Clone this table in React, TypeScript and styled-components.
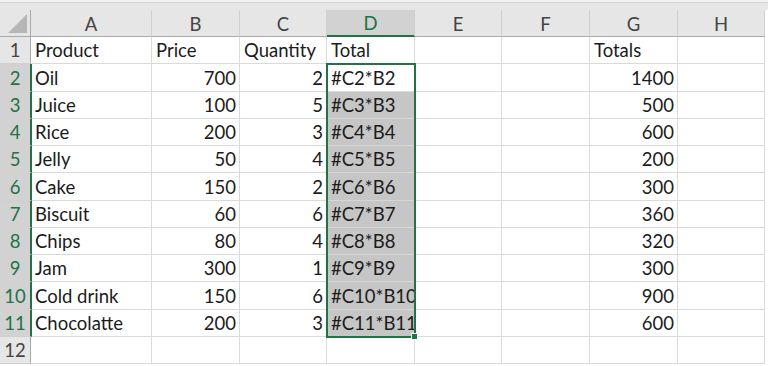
import React from "react";
import styled, { createGlobalStyle } from "styled-components";

const GREEN = "#217346";
const GRID_LINE = "#dadada";
const HEAD_BG = "#e6e6e6";
const HEAD_SEL_BG = "#d2d2d2";
const HEAD_EDGE = "#a9a9a9";
const SEL_FILL = "#c6c6c6";

const GlobalStyle = createGlobalStyle`
  html, body { margin: 0; padding: 0; background: #fff; }
  body { font-family: Lato, "Liberation Sans", sans-serif; }
  #root { width: 768px; height: 366px; overflow: hidden; }
`;

const COLUMNS = ["A", "B", "C", "D", "E", "F", "G", "H"];
const ACTIVE_COL = 3;
const SEL_FIRST_ROW = 2;
const SEL_LAST_ROW = 11;

const rows: string[][] = [
  ["Product", "Price", "Quantity", "Total", "", "", "Totals", ""],
  ["Oil", "700", "2", "#C2*B2", "", "", "1400", ""],
  ["Juice", "100", "5", "#C3*B3", "", "", "500", ""],
  ["Rice", "200", "3", "#C4*B4", "", "", "600", ""],
  ["Jelly", "50", "4", "#C5*B5", "", "", "200", ""],
  ["Cake", "150", "2", "#C6*B6", "", "", "300", ""],
  ["Biscuit", "60", "6", "#C7*B7", "", "", "360", ""],
  ["Chips", "80", "4", "#C8*B8", "", "", "320", ""],
  ["Jam", "300", "1", "#C9*B9", "", "", "300", ""],
  ["Cold drink", "150", "6", "#C10*B10", "", "", "900", ""],
  ["Chocolatte", "200", "3", "#C11*B11", "", "", "600", ""],
  ["", "", "", "", "", "", "", ""],
];

const Window = styled.div`
  width: 768px;
  height: 366px;
  background: #fff;
  overflow: hidden;
  display: flex;
  flex-direction: column;
`;

const TopStrip = styled.div`
  flex: 0 0 10px;
  background: linear-gradient(#f2f2f2 0 2px, #d2d2d2 2px 3px, ${HEAD_BG} 3px);
`;

const Sheet = styled.div`
  display: grid;
  grid-template-columns: 31px 121px 88px 87px 88px 87px 88px 88px 87px;
  grid-template-rows: 27px repeat(12, 27.27px);
  font-size: 18.5px;
  line-height: 20px;
`;

/* every part sits on an explicit track so the selection frame can overlap cells */
type Pos = { $r: number; $c: number };

const Corner = styled.div`
  grid-row: 1;
  grid-column: 1;
  background: ${HEAD_BG};
  border-right: 1px solid ${HEAD_EDGE};
  border-bottom: 1px solid ${HEAD_EDGE};
  display: flex;
  align-items: flex-end;
  justify-content: flex-end;
  padding: 0 3px 3px 0;
`;

const SelectAll = styled.div`
  width: 19px;
  height: 19px;
  background: #b6b6b6;
  clip-path: polygon(100% 0, 100% 100%, 0 100%);
`;

const ColHeader = styled.div<Pos & { $active?: boolean }>`
  grid-row: ${(p) => p.$r};
  grid-column: ${(p) => p.$c};
  background: ${(p) => (p.$active ? HEAD_SEL_BG : HEAD_BG)};
  color: ${(p) => (p.$active ? GREEN : "#444")};
  border-right: 1px solid #d0d0d0;
  border-bottom: ${(p) => (p.$active ? `2px solid ${GREEN}` : `1px solid ${HEAD_EDGE}`)};
  display: flex;
  align-items: center;
  justify-content: center;
  padding-top: 1px;
`;

const RowHeader = styled.div<Pos & { $active?: boolean }>`
  grid-row: ${(p) => p.$r};
  grid-column: ${(p) => p.$c};
  background: ${(p) => (p.$active ? HEAD_SEL_BG : HEAD_BG)};
  color: ${(p) => (p.$active ? GREEN : "#444")};
  border-right: ${(p) => (p.$active ? `2px solid ${GREEN}` : `1px solid ${HEAD_EDGE}`)};
  margin-right: ${(p) => (p.$active ? "-1px" : "0")};
  position: relative;
  z-index: ${(p) => (p.$active ? 1 : 0)};
  border-bottom: 1px solid #d0d0d0;
  display: flex;
  align-items: flex-end;
  justify-content: center;
  padding-bottom: 3px;
`;

const Cell = styled.div<Pos & { $numeric?: boolean; $selected?: boolean }>`
  grid-row: ${(p) => p.$r};
  grid-column: ${(p) => p.$c};
  background: ${(p) => (p.$selected ? SEL_FILL : "#fff")};
  color: #1b1b1b;
  border-right: 1px solid ${(p) => (p.$selected ? "#c0c0c0" : GRID_LINE)};
  border-bottom: 1px solid ${(p) => (p.$selected ? "#d6d6d6" : GRID_LINE)};
  display: flex;
  align-items: flex-end;
  justify-content: ${(p) => (p.$numeric ? "flex-end" : "flex-start")};
  padding: 0 ${(p) => (p.$numeric ? "3px" : "0")} 3px ${(p) => (p.$numeric ? "0" : "4px")};
  white-space: nowrap;
  overflow: visible;
`;

const Selection = styled.div`
  grid-column: ${ACTIVE_COL + 2};
  grid-row: ${SEL_FIRST_ROW + 1} / ${SEL_LAST_ROW + 2};
  margin: -1px;
  border: 2px solid ${GREEN};
  position: relative;
  z-index: 2;
  pointer-events: none;
`;

const FillHandle = styled.span`
  position: absolute;
  right: -4px;
  bottom: -4px;
  width: 7px;
  height: 7px;
  box-sizing: border-box;
  background: ${GREEN};
  border: 1px solid #fff;
`;

const isNumber = (v: string) => /^\d+$/.test(v);

export default function App() {
  return (
    <>
      <GlobalStyle />
      <Window>
        <TopStrip />
        <Sheet>
          <Corner>
            <SelectAll />
          </Corner>
          {COLUMNS.map((c, i) => (
            <ColHeader key={c} $r={1} $c={i + 2} $active={i === ACTIVE_COL}>
              {c}
            </ColHeader>
          ))}
          {rows.map((row, r) => {
            const n = r + 1;
            const inSel = n >= SEL_FIRST_ROW && n <= SEL_LAST_ROW;
            return (
              <React.Fragment key={n}>
                <RowHeader $r={n + 1} $c={1} $active={inSel}>
                  {n}
                </RowHeader>
                {row.map((v, c) => (
                  <Cell
                    key={c}
                    $r={n + 1}
                    $c={c + 2}
                    $numeric={isNumber(v)}
                    $selected={inSel && c === ACTIVE_COL && n !== SEL_FIRST_ROW}
                  >
                    {v}
                  </Cell>
                ))}
              </React.Fragment>
            );
          })}
          <Selection>
            <FillHandle />
          </Selection>
        </Sheet>
      </Window>
    </>
  );
}
